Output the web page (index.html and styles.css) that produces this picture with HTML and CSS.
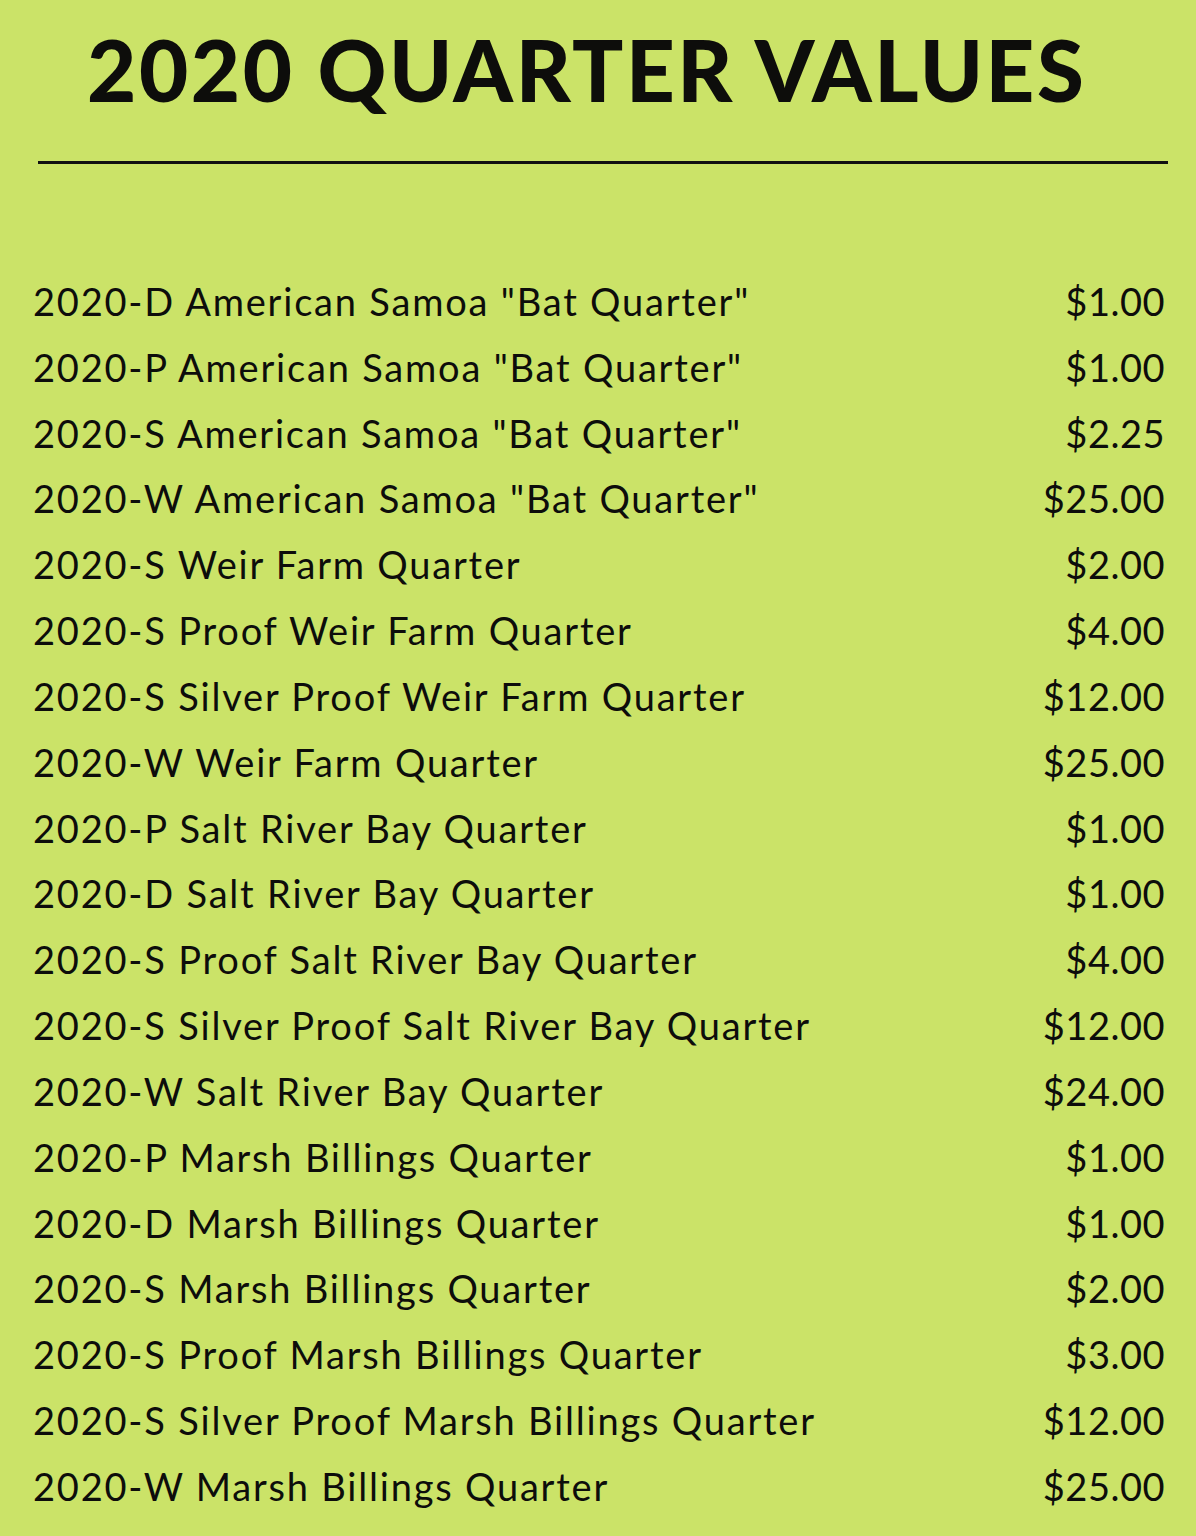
FILE: index.html
```html
<!DOCTYPE html>
<html lang="en">
<head>
<meta charset="utf-8">
<title>2020 Quarter Values</title>
<link rel="stylesheet" href="styles.css">
</head>
<body>
<main class="sheet">
  <header class="head">
    <h1 class="title">2020 QUARTER VALUES</h1>
    <div class="rule"></div>
  </header>
  <ul class="list">
    <li class="row"><span class="name">2020-D American Samoa "Bat Quarter"</span><span class="price">$1.00</span></li>
    <li class="row"><span class="name">2020-P American Samoa "Bat Quarter"</span><span class="price">$1.00</span></li>
    <li class="row"><span class="name">2020-S American Samoa "Bat Quarter"</span><span class="price">$2.25</span></li>
    <li class="row"><span class="name">2020-W American Samoa "Bat Quarter"</span><span class="price">$25.00</span></li>
    <li class="row"><span class="name">2020-S Weir Farm Quarter</span><span class="price">$2.00</span></li>
    <li class="row"><span class="name">2020-S Proof Weir Farm Quarter</span><span class="price">$4.00</span></li>
    <li class="row"><span class="name">2020-S Silver Proof Weir Farm Quarter</span><span class="price">$12.00</span></li>
    <li class="row"><span class="name">2020-W Weir Farm Quarter</span><span class="price">$25.00</span></li>
    <li class="row"><span class="name">2020-P Salt River Bay Quarter</span><span class="price">$1.00</span></li>
    <li class="row"><span class="name">2020-D Salt River Bay Quarter</span><span class="price">$1.00</span></li>
    <li class="row"><span class="name">2020-S Proof Salt River Bay Quarter</span><span class="price">$4.00</span></li>
    <li class="row"><span class="name">2020-S Silver Proof Salt River Bay Quarter</span><span class="price">$12.00</span></li>
    <li class="row"><span class="name">2020-W Salt River Bay Quarter</span><span class="price">$24.00</span></li>
    <li class="row"><span class="name">2020-P Marsh Billings Quarter</span><span class="price">$1.00</span></li>
    <li class="row"><span class="name">2020-D Marsh Billings Quarter</span><span class="price">$1.00</span></li>
    <li class="row"><span class="name">2020-S Marsh Billings Quarter</span><span class="price">$2.00</span></li>
    <li class="row"><span class="name">2020-S Proof Marsh Billings Quarter</span><span class="price">$3.00</span></li>
    <li class="row"><span class="name">2020-S Silver Proof Marsh Billings Quarter</span><span class="price">$12.00</span></li>
    <li class="row"><span class="name">2020-W Marsh Billings Quarter</span><span class="price">$25.00</span></li>
  </ul>
</main>
</body>
</html>
```

FILE: styles.css
```css
html, body {
  margin: 0;
  padding: 0;
  background: #cbe368;
}
.sheet {
  width: 1196px;
  height: 1536px;
  background: #cbe368;
  color: #0d0d0b;
  overflow: hidden;
}
.head {
  padding-top: 19px;
}
.title {
  margin: 0;
  padding-left: 87px;
  font-family: "Lato", sans-serif;
  font-weight: 900;
  font-size: 85px;
  line-height: 100px;
  letter-spacing: 2.6px;
  white-space: nowrap;
}
.rule {
  margin: 42px 28px 0 38px;
  height: 3px;
  background: #111;
}
.list {
  list-style: none;
  margin: 104px 0 0 0;
  padding: 0 31px 0 33px;
}
.row {
  display: flex;
  justify-content: space-between;
  align-items: center;
  height: 65.83px;
  font-family: "Lato", sans-serif;
  font-weight: 400;
  font-size: 38px;
  letter-spacing: 1.8px;
  white-space: nowrap;
}
.price {
  letter-spacing: 0.5px;
}
```
